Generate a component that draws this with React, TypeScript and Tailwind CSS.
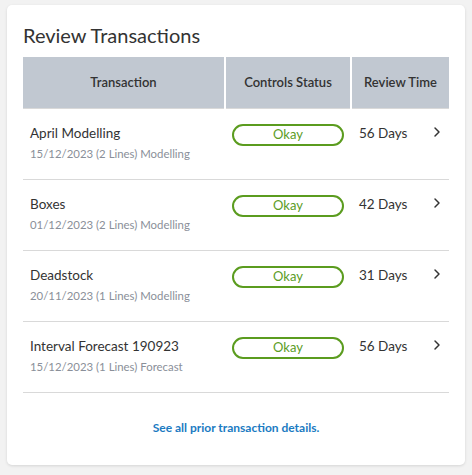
import { ChevronRight } from "lucide-react";

interface Txn {
  name: string;
  meta: string;
  days: string;
}

const rows: Txn[] = [
  { name: "April Modelling", meta: "15/12/2023 (2 Lines) Modelling", days: "56 Days" },
  { name: "Boxes", meta: "01/12/2023 (2 Lines) Modelling", days: "42 Days" },
  { name: "Deadstock", meta: "20/11/2023 (1 Lines) Modelling", days: "31 Days" },
  { name: "Interval Forecast 190923", meta: "15/12/2023 (1 Lines) Forecast", days: "56 Days" },
];

export default function App() {
  return (
    <div className="min-h-screen bg-[#f2f2f2] pt-[5px] pl-[7px] font-['Lato','Open_Sans',sans-serif]">
      <div className="w-[458px] h-[460px] rounded-[5px] bg-white shadow-[0_1px_3px_rgba(0,0,0,0.12)] px-4 pt-[18px]">
        <h2 className="text-[20px] leading-6 text-[#333]">Review Transactions</h2>

        <table className="mt-[10px] w-[426px] border-collapse">
          <thead>
            <tr className="h-[51px] bg-[#c1c8d1] text-[13px] font-semibold text-[#333]">
              <th className="w-[202px] font-semibold">Transaction</th>
              <th className="w-[126px] border-l-2 border-white font-semibold">Controls Status</th>
              <th className="border-l-2 border-white font-semibold">Review Time</th>
            </tr>
          </thead>
          <tbody>
            {rows.map((r) => (
              <tr key={r.name} className="h-[71px] border-t border-[#d9d9d9] align-top">
                <td className="pl-[7px] pt-[16px]">
                  <p className="text-[13.5px] leading-4 text-[#333]">{r.name}</p>
                  <p className="mt-[5px] text-[11.4px] leading-4 text-[#8a8f99]">{r.meta}</p>
                </td>
                <td className="pt-[15px]">
                  <div className="mx-auto flex h-[22px] w-[112px] items-center justify-center rounded-full border-2 border-[#5b9c1f] text-[13px] text-[#5b9c1f]">
                    Okay
                  </div>
                </td>
                <td className="pt-[16px]">
                  <div className="flex items-center justify-between pl-[8px] pr-[4px]">
                    <span className="text-[13.5px] leading-4 text-[#333]">{r.days}</span>
                    <ChevronRight className="h-4 w-4 text-[#333] -mt-[2px]" strokeWidth={2.2} />
                  </div>
                </td>
              </tr>
            ))}
            <tr className="border-t border-[#d9d9d9]">
              <td colSpan={3} className="pt-[21px] text-center">
                <a href="#" className="text-[12px] leading-4 font-bold text-[#1b7bc2]">
                  See all prior transaction details.
                </a>
              </td>
            </tr>
          </tbody>
        </table>
      </div>
    </div>
  );
}
